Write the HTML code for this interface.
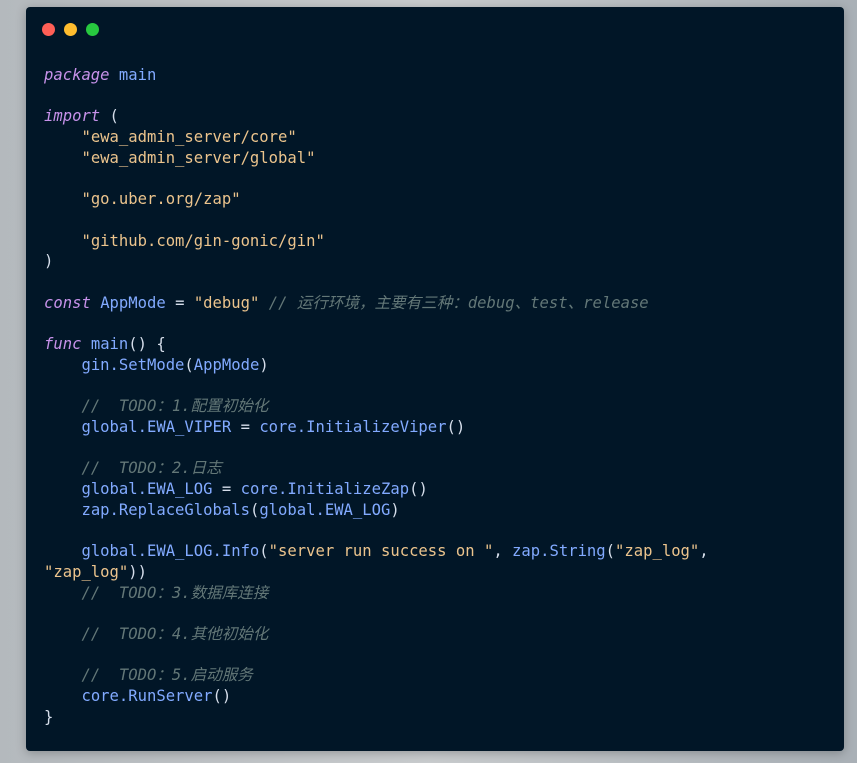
<!DOCTYPE html>
<html><head><meta charset="utf-8"><style>
html,body{margin:0;padding:0}
body{width:857px;height:763px;background:linear-gradient(90deg,#b4b9bd,#c9ccce 50%,#a9b0b6);position:relative;overflow:hidden}
.card{position:absolute;left:26px;top:7px;width:818px;height:744px;background:#011627;border-radius:4px;box-shadow:0 2px 10px rgba(0,0,0,.25)}
.dot{position:absolute;top:23px;width:13px;height:13px;border-radius:50%}
pre{position:absolute;left:44px;top:65px;margin:0;font-family:"DejaVu Sans Mono","Liberation Mono","Noto Sans CJK SC",monospace;font-size:15.55px;line-height:20.7px;color:#d6deeb;white-space:pre}
.k{color:#c792ea;font-style:italic}.b{color:#82aaff}.s{color:#ecc48d}.c{color:#637777;font-style:italic}.p{color:#d6deeb}
</style></head><body>
<div class="card"></div>
<div class="dot" style="left:42px;background:#ff5f56"></div>
<div class="dot" style="left:64px;background:#ffbd2e"></div>
<div class="dot" style="left:86px;background:#27c93f"></div>
<pre><span class="k">package</span> <span class="b">main</span>

<span class="k">import</span> (
    <span class="s">"ewa_admin_server/core"</span>
    <span class="s">"ewa_admin_server/global"</span>

    <span class="s">"go.uber.org/zap"</span>

    <span class="s">"github.com/gin-gonic/gin"</span>
)

<span class="k">const</span> <span class="b">AppMode</span> = <span class="s">"debug"</span> <span class="c">// 运行环境，主要有三种：debug、test、release</span>

<span class="k">func</span> <span class="b">main</span>() {
    <span class="b">gin.SetMode</span>(<span class="b">AppMode</span>)

    <span class="c">//  TODO：1.配置初始化</span>
    <span class="b">global.EWA_VIPER</span> = <span class="b">core.InitializeViper</span>()

    <span class="c">//  TODO：2.日志</span>
    <span class="b">global.EWA_LOG</span> = <span class="b">core.InitializeZap</span>()
    <span class="b">zap.ReplaceGlobals</span>(<span class="b">global.EWA_LOG</span>)

    <span class="b">global.EWA_LOG.Info</span>(<span class="s">"server run success on "</span>, <span class="b">zap.String</span>(<span class="s">"zap_log"</span>,
<span class="s">"zap_log"</span>))
    <span class="c">//  TODO：3.数据库连接</span>

    <span class="c">//  TODO：4.其他初始化</span>

    <span class="c">//  TODO：5.启动服务</span>
    <span class="b">core.RunServer</span>()
}</pre>
</body></html>
